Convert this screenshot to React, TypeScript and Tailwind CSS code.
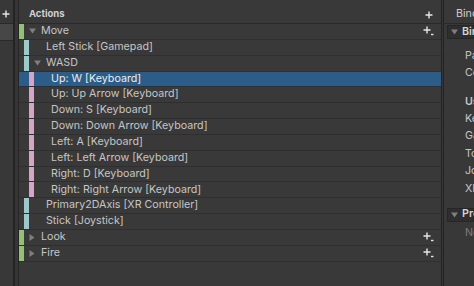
import React from "react";

type Row = {
  label: string;
  depth: 0 | 1 | 2;
  kind: "action" | "binding" | "part";
  arrow?: "down" | "right";
  selected?: boolean;
  plus?: boolean;
};

const rows: Row[] = [
  { label: "Move", depth: 0, kind: "action", arrow: "down", plus: true },
  { label: "Left Stick [Gamepad]", depth: 1, kind: "binding" },
  { label: "WASD", depth: 1, kind: "binding", arrow: "down" },
  { label: "Up: W [Keyboard]", depth: 2, kind: "part", selected: true },
  { label: "Up: Up Arrow [Keyboard]", depth: 2, kind: "part" },
  { label: "Down: S [Keyboard]", depth: 2, kind: "part" },
  { label: "Down: Down Arrow [Keyboard]", depth: 2, kind: "part" },
  { label: "Left: A [Keyboard]", depth: 2, kind: "part" },
  { label: "Left: Left Arrow [Keyboard]", depth: 2, kind: "part" },
  { label: "Right: D [Keyboard]", depth: 2, kind: "part" },
  { label: "Right: Right Arrow [Keyboard]", depth: 2, kind: "part" },
  { label: "Primary2DAxis [XR Controller]", depth: 1, kind: "binding" },
  { label: "Stick [Joystick]", depth: 1, kind: "binding" },
  { label: "Look", depth: 0, kind: "action", arrow: "right", plus: true },
  { label: "Fire", depth: 0, kind: "action", arrow: "right", plus: true },
];

function Plus() {
  return (
    <svg width="8" height="8" viewBox="0 0 8 8">
      <path d="M4 0.5V7.5M0.5 4H7.5" stroke="#e6e6e6" strokeWidth="1.4" />
    </svg>
  );
}

function PlusMore() {
  return (
    <svg width="11" height="10" viewBox="0 0 11 10">
      <path d="M4 0.5V7.5M0.5 4H7.5" stroke="#e6e6e6" strokeWidth="1.4" />
      <path d="M8 8.5H10.5" stroke="#e6e6e6" strokeWidth="1.4" />
    </svg>
  );
}

function Arrow({ dir }: { dir: "down" | "right" }) {
  return dir === "down" ? (
    <svg width="7" height="6" viewBox="0 0 7 6">
      <path d="M0 0.5H7L3.5 5.5Z" fill="#7e7e7e" />
    </svg>
  ) : (
    <svg width="6" height="7" viewBox="0 0 6 7">
      <path d="M0.5 0V7L5.5 3.5Z" fill="#7e7e7e" />
    </svg>
  );
}

function ActionRow({ r }: { r: Row }) {
  const spacer = r.depth === 0 ? "w-0" : r.depth === 1 ? "w-[5px]" : "w-[10px]";
  const bar =
    r.kind === "action" ? "bg-[#93c073]" : r.kind === "binding" ? "bg-[#9fc8cb]" : "bg-[#d6a4c6]";
  return (
    <div
      className={`flex items-center h-[15.85px] border-b border-[#2f2f2f] box-border ${
        r.selected ? "bg-[#2c5d88] text-[#ececec]" : "text-[#c6c6c6]"
      }`}
    >
      <div className={`${spacer} shrink-0`} />
      <div className={`w-[5px] h-full shrink-0 ${bar}`} />
      <div className="w-[16px] shrink-0 flex items-center pl-[5px]">
        {r.arrow ? <Arrow dir={r.arrow} /> : null}
      </div>
      <span className="flex-1 whitespace-nowrap leading-none pl-[1px]">{r.label}</span>
      {r.plus ? (
        <div className="w-[16px] pr-[2px] flex items-center justify-start shrink-0 mr-[2px]">
          <PlusMore />
        </div>
      ) : null}
    </div>
  );
}

export default function App() {
  return (
    <div
      className="w-[474px] h-[286px] overflow-hidden flex bg-[#383838] text-[10.7px] text-[#c6c6c6]"
      style={{ fontFamily: "Inter, 'Noto Sans', sans-serif" }}
    >
      {/* Left action maps panel */}
      <div className="w-[15px] shrink-0 flex flex-col border-r-2 border-[#242424]">
        <div className="h-[24px] flex items-start pt-[10px] pl-[2px] border-b border-[#2a2a2a]">
          <Plus />
        </div>
        <div className="h-[17px] bg-[#474747] border-b border-[#2a2a2a]" />
        <div className="flex-1" />
      </div>
      <div className="w-[3px] shrink-0 bg-[#363636]" />
      {/* Actions panel */}
      <div className="w-[424px] shrink-0 flex flex-col border-l border-r border-[#242424] bg-[#393939]">
        <div className="h-[24px] flex items-center pt-[6px] pl-[10px] pr-[8px] border-b border-[#2a2a2a] box-border">
          <span className="flex-1 font-bold text-[9.5px] text-[#d0d0d0]">Actions</span>
          <Plus />
        </div>
        {rows.map((r, i) => (
          <ActionRow key={i} r={r} />
        ))}
        <div className="flex-1" />
      </div>
      <div className="w-[2px] shrink-0 bg-[#353535] border-r border-[#242424]" />
      {/* Right properties panel */}
      <div className="flex-1 flex flex-col overflow-hidden whitespace-nowrap bg-[#383838]">
        <div className="h-[24px] flex items-center pt-[6px] pl-[12px] border-b border-[#2a2a2a] box-border text-[#d0d0d0]">
          Binding Properties
        </div>
        <div className="mt-[1px] ml-[3px] h-[14px] flex items-center bg-[#2e2e2e] border border-[#262626] text-[#d4d4d4] font-semibold">
          <span className="ml-[3px] mr-[4px] flex items-center">
            <Arrow dir="down" />
          </span>
          Binding
        </div>
        <div className="pl-[21px] flex flex-col text-[#c6c6c6]">
          <div className="mt-[9px] h-[17px] flex items-center">Path</div>
          <div className="h-[16px] flex items-center">Composite Part</div>
          <div className="mt-[12px] h-[18px] flex items-center font-semibold">Use in control scheme</div>
          <div className="h-[17px] flex items-center">Keyboard&amp;Mouse</div>
          <div className="h-[17px] flex items-center">Gamepad</div>
          <div className="h-[17.5px] flex items-center">Touch</div>
          <div className="h-[18px] flex items-center">Joystick</div>
          <div className="h-[18px] flex items-center">XR</div>
        </div>
        <div className="mt-[9px] ml-[3px] h-[14px] flex items-center bg-[#2e2e2e] border border-[#262626] text-[#d4d4d4] font-semibold">
          <span className="ml-[3px] mr-[4px] flex items-center">
            <Arrow dir="down" />
          </span>
          Processors
        </div>
        <div className="pl-[21px] mt-[4px] h-[16px] flex items-center text-[#7c7c7c]">
          No Processors have been added.
        </div>
      </div>
    </div>
  );
}
